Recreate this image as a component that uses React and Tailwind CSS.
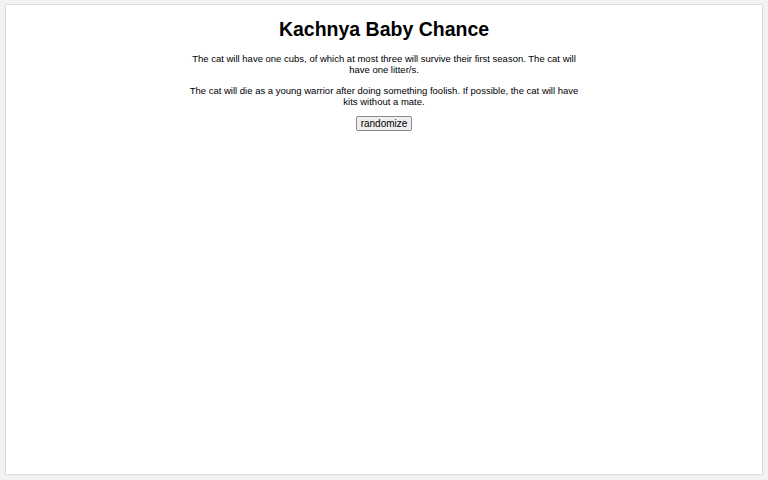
import React, { useState } from "react";

const App = () => {
  const [seed, setSeed] = useState(0);

  return (
    <div className="min-h-screen w-full bg-[#f2f2f2] px-[5px] pt-[4px] pb-[4px] font-['Liberation_Sans',Arial,sans-serif]">
      <div className="h-[471px] border border-[#dcdcdc] bg-white">
        <div className="mx-auto flex w-[400px] flex-col items-center text-center text-black">
          <h1 className="mt-[12px] text-[19.5px] font-bold leading-[24px]">Kachnya Baby Chance</h1>
          <p className="mt-[12px] text-[9.5px] leading-[11px]">
            The cat will have one cubs, of which at most three will survive their first season. The cat will have one litter/s.
          </p>
          <p className="mt-[10px] text-[9.5px] leading-[11px]">
            The cat will die as a young warrior after doing something foolish. If possible, the cat will have kits without a mate.
          </p>
          <button
            onClick={() => setSeed(seed + 1)}
            className="mt-[9px] h-[15px] rounded-[2px] border border-[#8a8a8a] bg-[#efefef] px-[4px] text-[10px] leading-[13px]"
          >
            randomize
          </button>
        </div>
      </div>
    </div>
  );
};

export default App;
